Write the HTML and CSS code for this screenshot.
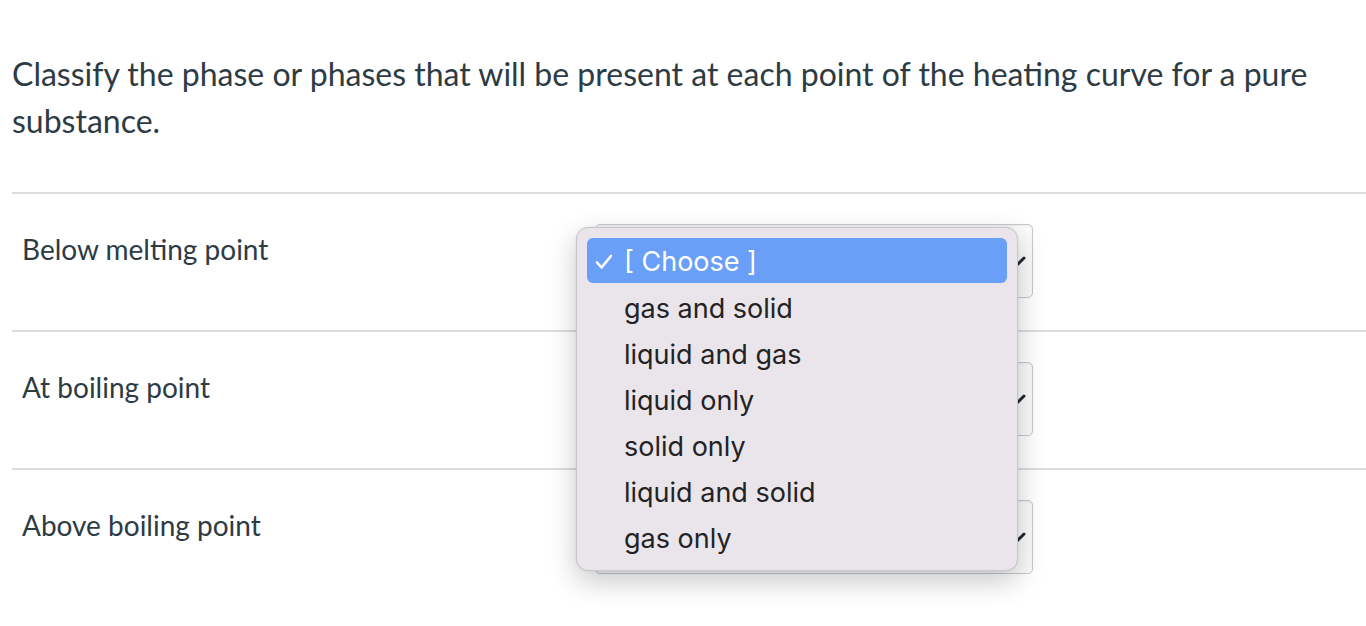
FILE: index.html
```html
<!DOCTYPE html>
<html>
<head>
<meta charset="utf-8">
<link rel="stylesheet" href="styles.css">
</head>
<body>
<div class="question">
  <p class="prompt">Classify the phase or phases that will be present at each point of the heating curve for a pure substance.</p>
  <div class="rows">
    <div class="row">
      <div class="label">Below melting point</div>
      <div class="select-wrap">
        <div class="select"><svg class="chev" width="16" height="12" viewBox="0 0 16 12"><path d="M2 3 L8 9 L14 3" fill="none" stroke="#1f2a33" stroke-width="3" stroke-linecap="round" stroke-linejoin="round"/></svg></div>
        <ul class="popup">
          <li class="opt active"><svg class="check" width="18" height="16" viewBox="0 0 18 16"><path d="M2 8.5 L6.5 13.5 L16 2" fill="none" stroke="#ffffff" stroke-width="2.6" stroke-linecap="round" stroke-linejoin="round"/></svg>[ Choose ]</li>
          <li class="opt">gas and solid</li>
          <li class="opt">liquid and gas</li>
          <li class="opt">liquid only</li>
          <li class="opt">solid only</li>
          <li class="opt">liquid and solid</li>
          <li class="opt">gas only</li>
        </ul>
      </div>
    </div>
    <div class="row">
      <div class="label">At boiling point</div>
      <div class="select-wrap">
        <div class="select"><svg class="chev" width="16" height="12" viewBox="0 0 16 12"><path d="M2 3 L8 9 L14 3" fill="none" stroke="#1f2a33" stroke-width="3" stroke-linecap="round" stroke-linejoin="round"/></svg></div>
      </div>
    </div>
    <div class="row">
      <div class="label">Above boiling point</div>
      <div class="select-wrap">
        <div class="select"><svg class="chev" width="16" height="12" viewBox="0 0 16 12"><path d="M2 3 L8 9 L14 3" fill="none" stroke="#1f2a33" stroke-width="3" stroke-linecap="round" stroke-linejoin="round"/></svg></div>
      </div>
    </div>
  </div>
</div>
</body>
</html>
```

FILE: styles.css
```css
html, body {
  margin: 0;
  padding: 0;
  background: #ffffff;
}
body {
  font-family: Lato, "Open Sans", sans-serif;
  color: #2d3b45;
}
.question {
  padding-left: 12px;
}
.prompt {
  margin: 0;
  padding-top: 50px;
  font-size: 32px;
  line-height: 47px;
  padding-right: 20px;
}
.rows {
  margin-top: 48px;
}
.row {
  display: grid;
  grid-template-columns: 583px 438px;
  align-items: start;
  border-top: 2px solid #dadcdd;
  padding: 30px 0 32px 0;
}
.label {
  padding-left: 10px;
  padding-top: 8px;
  font-size: 28px;
  line-height: 34px;
}
.select-wrap {
  position: relative;
  height: 74px;
}
.select {
  height: 72px;
  border: 1px solid #c5c9cc;
  border-radius: 5px;
  background: #fbfbfb;
  display: flex;
  align-items: center;
  justify-content: flex-end;
  padding-right: 6px;
  box-shadow: inset 0 1px 2px rgba(0,0,0,0.06);
}
.chev {
  display: block;
}
.popup {
  position: absolute;
  left: -19px;
  top: 3px;
  width: 420px;
  margin: 0;
  padding: 10px;
  list-style: none;
  background: #e9e5ea;
  border: 1px solid #c9c6ca;
  border-radius: 12px;
  box-shadow: 0 10px 28px rgba(0,0,0,0.22), 0 0 2px rgba(0,0,0,0.1);
  font-family: Inter, "Liberation Sans", sans-serif;
  z-index: 5;
}
.opt {
  height: 46px;
  line-height: 46px;
  padding-top: 2px;
  padding-left: 37px;
  font-size: 27px;
  color: #232224;
  position: relative;
  border-radius: 6px;
  box-sizing: border-box;
}
.opt.active {
  background: #6a9ff8;
  color: #ffffff;
  height: 45px;
  line-height: 45px;
  padding-top: 1px;
  margin-bottom: 1px;
}
.check {
  position: absolute;
  left: 8px;
  top: 16px;
}
```
